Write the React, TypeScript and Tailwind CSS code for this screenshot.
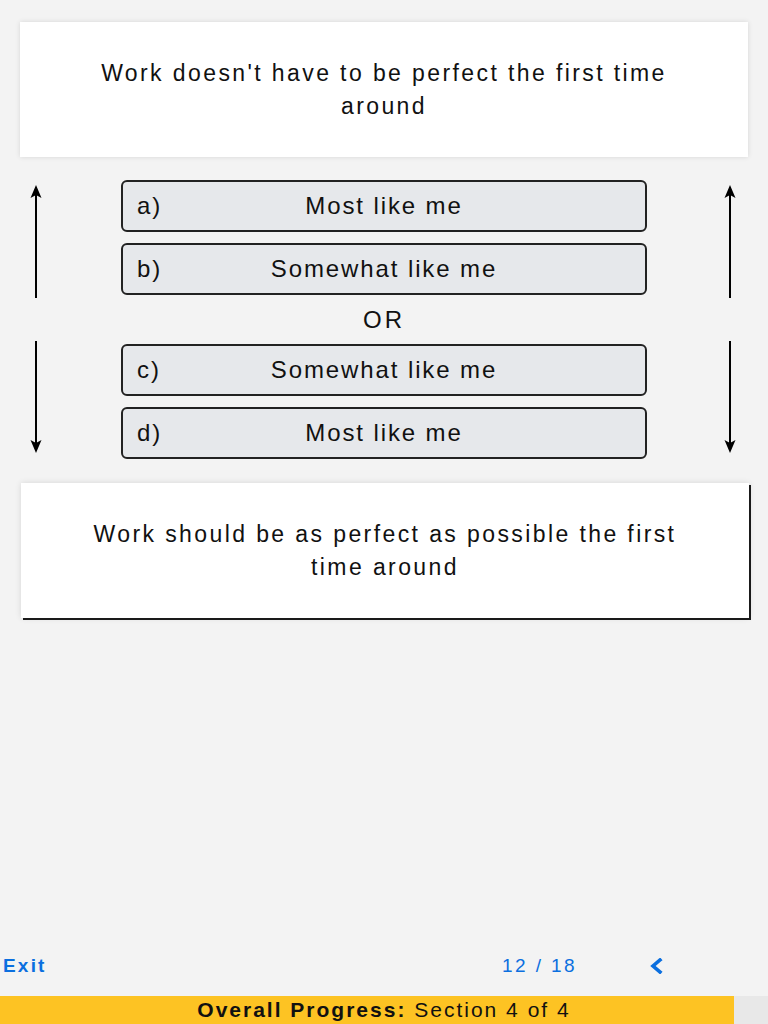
import React from "react";

const font = { fontFamily: '"Liberation Sans", Arial, sans-serif' };

type Option = { key: string; label: string };

const upper: Option[] = [
  { key: "a)", label: "Most like me" },
  { key: "b)", label: "Somewhat like me" },
];

const lower: Option[] = [
  { key: "c)", label: "Somewhat like me" },
  { key: "d)", label: "Most like me" },
];

function ArrowUp() {
  return (
    <svg width="14" height="113" viewBox="0 0 14 113" className="block">
      <line x1="7" y1="8" x2="7" y2="113" stroke="#000" strokeWidth="2" />
      <polygon points="7,0 12.5,13 7,10 1.5,13" fill="#000" />
    </svg>
  );
}

function ArrowDown() {
  return (
    <svg width="14" height="112" viewBox="0 0 14 112" className="block">
      <line x1="7" y1="0" x2="7" y2="104" stroke="#000" strokeWidth="2" />
      <polygon points="7,112 12.5,99 7,102 1.5,99" fill="#000" />
    </svg>
  );
}

function ArrowColumn() {
  return (
    <div className="flex flex-col items-center pt-[5px]">
      <ArrowUp />
      <div className="h-[43px]" />
      <ArrowDown />
    </div>
  );
}

function OptionButton({ opt }: { opt: Option }) {
  return (
    <button
      type="button"
      className="grid h-[52px] w-full grid-cols-[1fr_auto_1fr] items-center rounded-[6px] border-2 border-[#222] bg-[#e6e8eb] px-[14px] text-[24px] tracking-[1.9px] text-[#111]"
    >
      <span className="text-left">{opt.key}</span>
      <span>{opt.label}</span>
      <span />
    </button>
  );
}

export default function App() {
  return (
    <div style={font} className="flex min-h-screen flex-col bg-[#f3f3f3] text-[#111]">
      <main className="flex flex-col pt-[22px]">
        <section className="ml-[20px] flex h-[135px] w-[728px] items-center justify-center bg-white px-[55px] shadow-[0_0_5px_rgba(0,0,0,0.12)]">
          <p className="text-center text-[23px] leading-[33px] tracking-[2.4px]">
            Work doesn't have to be perfect the first time around
          </p>
        </section>

        <div className="mt-[23px] flex">
          <div className="flex w-[72px] justify-center">
            <ArrowColumn />
          </div>
          <div className="ml-[49px] flex w-[526px] flex-col">
            <div className="flex flex-col gap-[11px]">
              {upper.map((o) => (
                <OptionButton key={o.key} opt={o} />
              ))}
            </div>
            <div className="flex h-[49px] items-center justify-center text-[24px] tracking-[3px]">
              OR
            </div>
            <div className="flex flex-col gap-[11px]">
              {lower.map((o) => (
                <OptionButton key={o.key} opt={o} />
              ))}
            </div>
          </div>
          <div className="ml-[65px] flex w-[36px] justify-center">
            <ArrowColumn />
          </div>
        </div>

        <section className="ml-[21px] mt-[24px] flex h-[135px] w-[728px] items-center justify-center bg-white px-[45px] shadow-[2px_2px_0_#1a1a1a,0_0_6px_rgba(0,0,0,0.12)]">
          <p className="text-center text-[23px] leading-[33px] tracking-[2.4px]">
            Work should be as perfect as possible the first time around
          </p>
        </section>
      </main>

      <footer className="mt-auto">
        <div className="flex h-[60px] items-center text-[19px] text-[#0b6fdf]">
          <button type="button" className="pl-[3px] font-bold tracking-[2.2px]">
            Exit
          </button>
          <div className="flex-1" />
          <span className="tracking-[2.4px]">12 / 18</span>
          <button type="button" className="ml-[72px] mr-[105px]">
            <svg width="14" height="16" viewBox="0 0 14 16" className="block">
              <polyline
                points="11,2 4,8 11,14"
                fill="none"
                stroke="#0b6fdf"
                strokeWidth="3.6"
                strokeLinecap="square"
              />
            </svg>
          </button>
        </div>
        <div className="relative h-[28px] bg-[#e8e8e8]">
          <div className="h-full w-[734px] bg-[#fdc323]" />
          <p className="absolute inset-0 flex items-center justify-center text-[21px] tracking-[2px] text-[#111]">
            <span className="font-bold">Overall Progress:</span>
            <span>&nbsp;Section 4 of 4</span>
          </p>
        </div>
      </footer>
    </div>
  );
}
